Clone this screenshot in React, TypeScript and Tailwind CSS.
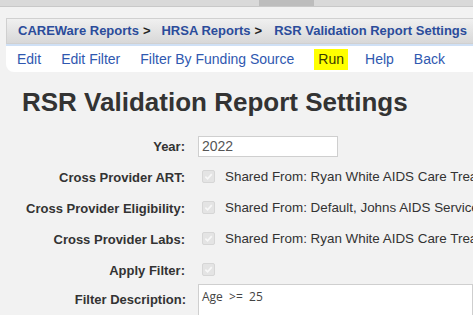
import React from "react";

function Check() {
  return (
    <span className="inline-flex h-[13px] w-[13px] items-center justify-center rounded-[2px] border border-[#d6d6d6] bg-[#e4e4e4]">
      <svg width="9" height="9" viewBox="0 0 10 10">
        <path d="M1.5 5.2 L4 7.6 L8.6 2.4" fill="none" stroke="#f8f8f8" strokeWidth="1.8" />
      </svg>
    </span>
  );
}

function Row({ label, children }: { label: string; children?: React.ReactNode }) {
  return (
    <div className="flex h-[31px] items-center">
      <div className="w-[186px] shrink-0 pr-[1px] text-right text-[13px] font-bold text-[#333]">{label}</div>
      <div className="flex items-center pl-[12px]">{children}</div>
    </div>
  );
}

export default function App() {
  const menu = ["Edit", "Edit Filter", "Filter By Funding Source", "Run", "Help", "Back"];
  return (
    <div className="h-[315px] w-[473px] overflow-hidden bg-[#f2f2f2]" style={{ fontFamily: '"Liberation Sans", Arial, sans-serif' }}>
      <div className="flex h-[7px] border-b border-[#c8c8c8] bg-[#d9d9d9]">
        <div className="ml-[259px] w-[55px] bg-[#bdbdbd]" />
      </div>
      <div className="pl-[6px] pt-[11px]">
        <div className="flex h-[26px] items-center gap-[4px] border border-r-0 border-[#d0d0d0] bg-gradient-to-b from-[#f0f0f0] to-[#d8d8d8] pl-[11px] text-[13px] font-bold text-[#2b4c9b] whitespace-nowrap">
          <span>CAREWare Reports</span>
          <span className="text-[#222]">&gt;</span>
          <span className="ml-[7px]">HRSA Reports</span>
          <span className="text-[#222]">&gt;</span>
          <span className="ml-[8px]">RSR Validation Report Settings</span>
        </div>
        <div className="h-[2px] bg-[#cfe0f5]" />
        <div className="flex h-[26px] items-center rounded-bl-[8px] bg-white pl-[11px] text-[14px] text-[#2f58b0] whitespace-nowrap">
          {menu.map((m) => (
            <span key={m} className={m === "Run" ? "mr-[17px] bg-[#ffff00] px-[4px] text-[#3a3a00]" : "mr-[20px]"}>{m}</span>
          ))}
        </div>
      </div>
      <h1 className="mt-[14px] pl-[22px] text-[26px] font-bold leading-[32px] text-[#333] whitespace-nowrap">RSR Validation Report Settings</h1>
      <div className="mt-[13px] text-[13.4px] text-[#333] whitespace-nowrap">
        <Row label="Year:">
          <div className="flex h-[21px] w-[140px] items-center border border-[#cfcfcf] bg-white px-[3px] text-[14px] text-[#555]">2022</div>
        </Row>
        <Row label="Cross Provider ART:">
          <span className="ml-[4px]"><Check /></span>
          <span className="ml-[10px]">Shared From: Ryan White AIDS Care Treatment</span>
        </Row>
        <Row label="Cross Provider Eligibility:">
          <span className="ml-[4px]"><Check /></span>
          <span className="ml-[10px]">Shared From: Default, Johns AIDS Services</span>
        </Row>
        <Row label="Cross Provider Labs:">
          <span className="ml-[4px]"><Check /></span>
          <span className="ml-[10px]">Shared From: Ryan White AIDS Care Treatment</span>
        </Row>
        <Row label="Apply Filter:">
          <span className="ml-[4px]"><Check /></span>
        </Row>
        <div className="flex items-start">
          <div className="w-[186px] shrink-0 pt-[4px] text-right text-[13px] font-bold">Filter Description:</div>
          <div className="ml-[12px] mt-[-2px] h-[40px] w-[300px] border border-[#cfcfcf] bg-white px-[3px] pt-[3px] text-[12px] text-[#444] whitespace-pre" style={{ fontFamily: '"Open Sans", sans-serif' }}>Age  &gt;=  25</div>
        </div>
      </div>
    </div>
  );
}
